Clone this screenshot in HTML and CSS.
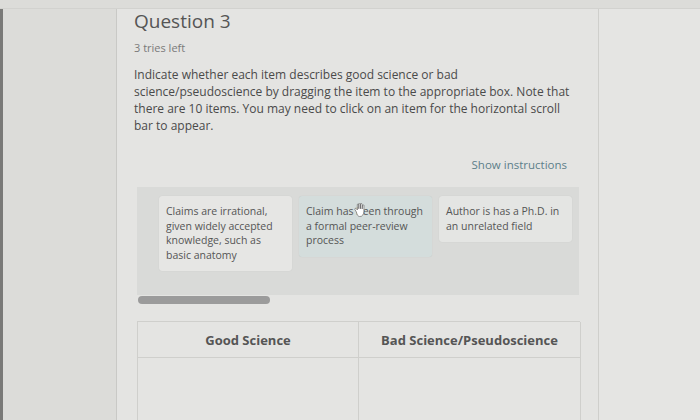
FILE: index.html
```html
<!DOCTYPE html>
<html>
<head>
<meta charset="utf-8">
<link rel="stylesheet" href="styles.css">
</head>
<body>
<div class="topbar"></div>
<div class="layout">
  <div class="edge"></div>
  <div class="leftpane"></div>
  <div class="main">
    <h1 class="title">Question 3</h1>
    <div class="tries">3 tries left</div>
    <p class="prompt">Indicate whether each item describes good science or bad science/pseudoscience by dragging the item to the appropriate box. Note that there are 10 items. You may need to click on an item for the horizontal scroll bar to appear.</p>
    <div class="instr-row"><span class="instr">Show instructions</span></div>
    <div class="bank">
      <div class="card card-a">Claims are irrational, given widely accepted knowledge, such as basic anatomy</div>
      <div class="card card-b">Claim has been through a formal peer-review process<svg class="cursor" width="15" height="14" viewBox="1.5 1.2 8.6 11.6"><path d="M3.2 8.6 L2 6.6 C1.6 5.9 2.4 5.3 3 5.8 L4 6.9 L4 2.6 C4 1.8 5.2 1.8 5.2 2.6 L5.2 6 L5.3 1.9 C5.3 1.1 6.6 1.1 6.6 1.9 L6.6 6 L6.8 2.3 C6.8 1.5 8 1.5 8 2.3 L8 6.2 L8.3 3.3 C8.3 2.6 9.5 2.6 9.5 3.3 L9.4 8.4 C9.3 10.6 8.2 12.4 6.2 12.4 C4.8 12.4 3.9 11.6 3.2 8.6 Z" fill="#fff" stroke="#444" stroke-width="0.45" stroke-linejoin="round"/></svg></div>
      <div class="card card-c">Author is has a Ph.D. in an unrelated field</div>
    </div>
    <div class="scrollbar"></div>
    <div class="table">
      <div class="cell head">Good Science</div>
      <div class="cell head">Bad Science/Pseudoscience</div>
      <div class="cell body"></div>
      <div class="cell body"></div>
    </div>
  </div>
  <div class="rightpane"></div>
</div>
</body>
</html>
```

FILE: styles.css
```css
html, body {
  margin: 0;
  padding: 0;
  width: 700px;
  height: 420px;
  overflow: hidden;
  background: #e3e3e1;
  font-family: "Open Sans", "Liberation Sans", sans-serif;
}
.topbar {
  height: 8px;
  background: #dcdcd9;
  border-bottom: 1px solid #d2d2cf;
}
.layout {
  display: flex;
  height: 411px;
}
.edge {
  width: 3px;
  background: #7a7a78;
}
.leftpane {
  width: 113px;
  background: #dcdcd9;
  border-right: 1px solid #c9c9c6;
}
.main {
  width: 482px;
  background: #e4e4e2;
  border-right: 1px solid #cfcfcc;
  padding-left: 17px;
  box-sizing: border-box;
  overflow: hidden;
}
.rightpane {
  flex: 1;
  background: #e5e5e3;
}
.title {
  margin: 0;
  font-size: 19px;
  line-height: 25px;
  font-weight: 400;
  color: #555;
}
.tries {
  margin-top: 6px;
  font-size: 11px;
  line-height: 15px;
  color: #7a7a7a;
}
.prompt {
  margin: 11px 0 0 0;
  width: 445px;
  font-size: 12px;
  line-height: 17px;
  color: #4a4a4a;
}
.instr-row {
  display: flex;
  justify-content: flex-end;
  width: 433px;
  margin-top: 23px;
}
.instr {
  font-size: 11.5px;
  line-height: 16px;
  color: #5d7f8a;
}
.bank {
  margin-top: 14px;
  margin-left: 3px;
  width: 442px;
  height: 108px;
  box-sizing: border-box;
  background: #d9dad8;
  display: flex;
  align-items: flex-start;
  gap: 7px;
  padding: 9px 0 0 22px;
}
.card {
  width: 133px;
  box-sizing: border-box;
  padding: 8px 7px 9px 7px;
  font-size: 10.5px;
  line-height: 14.5px;
  color: #555;
  border-radius: 3px;
  box-shadow: 0 0 1px rgba(0,0,0,0.12);
}
.card-a { background: #e6e6e4; }
.card-b {
  background: #d4dddc;
  position: relative;
}
.card-c { background: #e4e5e3; }
.cursor {
  position: absolute;
  left: 53px;
  top: 7px;
}
.scrollbar {
  margin: 1px 0 0 4px;
  width: 132px;
  height: 8px;
  border-radius: 4px;
  background: #9b9b9b;
}
.table {
  margin-top: 17px;
  margin-left: 3px;
  width: 443px;
  display: grid;
  grid-template-columns: 221px 222px;
  border-top: 1px solid #cfcfcc;
  border-left: 1px solid #cfcfcc;
  box-sizing: border-box;
}
.cell {
  border-right: 1px solid #cfcfcc;
  border-bottom: 1px solid #cfcfcc;
}
.head {
  height: 35px;
  display: flex;
  align-items: center;
  justify-content: center;
  font-size: 13px;
  font-weight: 700;
  color: #555;
}
.body {
  height: 80px;
}
```
